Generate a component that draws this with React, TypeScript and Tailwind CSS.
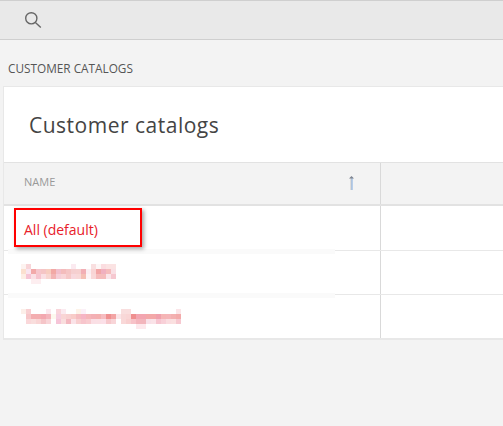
import React from 'react';

const blurRow1: string[][] = [
  ['#fdf3f0', '#f8d5d8', '', '', '', '', '', '', '', '', '#fbeaf0', '', '', '', '#f9dfe0', '#fdf6f6', '#fbdde0', '#fbe3e3', '#fbe3e3'],
  ['#fbe0cf', '#f9e5f0', '#f2a9a9', '#f6c6cc', '#f5c5c5', '#f7cdc0', '#f2a9a5', '#f2bfcc', '#f4bcbc', '#f5c5c5', '#f5cfd0', '#f6d0d0', '#f2afb5', '#fbeef2', '#f9d5d5', '#f2a5a5', '#f0b0c0', '#f5bcbc', '#f9e0e5'],
  ['#fdeee5', '#f6c5d5', '#fae0e5', '#f6c5cf', '#fadfe3', '#f8d5d0', '#f3b5b5', '#f6cfd8', '#f9d5d8', '#f6c8c8', '#f8d8dd', '#f8d8d8', '#f5c0b5', '#fdf4f6', '#f9d8d8', '#f5bcbc', '#f5bcbc', '#fae5ea', '#f6c8d0'],
  ['', '', '#fdeef0', '#fdeef0'],
];

const blurRow2: string[][] = [
  ['#fcefe9', '#f8d0d2', '', '', '', '#fbe8ee', '', '#f9d5da', '#fbeaf0', '', '', '#fdf3e8', '#fbf0f8', '', '', '', '', '', '', '', '#f9dede', '#f9dede', '', '', '', '', '', '', '', '', '', '#fbe5e8'],
  ['', '#f6c6c8', '#f3aeb0', '#f3aeb0', '#f3a8b0', '#f4b5bc', '#fdf8ee', '#f6cfe0', '#f9d5d5', '#f8d0d0', '#f8ccc8', '#f5bcc0', '#f6b5c5', '#f5b5b8', '#f3b0b5', '#f4b0b0', '#f6bcc0', '#ef9090', '#f3a5a5', '#fbe5e8', '#f8d8d8', '#f9d5d5', '#ef8f8f', '#f3a5b0', '#f3a5b0', '#f3a8a8', '#f3a8a8', '#f0a0ac', '#f5b5b5', '#f5b5b8', '#f3b0b0', '#f3aaaa'],
  ['', '#fad8da', '#f9dedd', '#f9d5d5', '#f5c5c8', '#f8d5d8', '', '#f6c5d8', '#f9dede', '#f3b8c0', '#fae3e8', '#f8cfd0', '#f7c5cc', '#f8ccd0', '#fadfe5', '#fae0e5', '#fbe0e8', '#f6c8cc', '#f8d5d8', '', '#f9d8d8', '#f8d0d0', '#f7c2c8', '#f3b5bc', '#f2b5bc', '#f8e0e8', '#fae3e8', '#f6c5d0', '#f8d0d8', '#fadde0', '#fae0e0', '#f6c8d0'],
  ['', '', '', '', '', '', '', '', '', '', '', '', '', '', '', '', '', '', '', '', '', '', '', '#fde8ec', '#fde8ec'],
];

// pixelated (redacted) row name
const BlurBlock: React.FC<{ rows: string[][] }> = ({ rows }) => (
  <svg width={rows[0].length * 5} height={20} viewBox={`0 0 ${rows[0].length * 5} 20`} shapeRendering="crispEdges" className="block">
    {rows.map((cells, y) =>
      cells.map((fill, x) => (fill ? <rect key={`${x}-${y}`} x={x * 5} y={y * 5} width={5} height={5} fill={fill} /> : null))
    )}
  </svg>
);

export default function App() {
  return (
    <div className="relative h-[426px] w-[503px] overflow-hidden bg-[#f3f3f3] font-['Open_Sans',sans-serif]">
      <div className="flex h-[40px] items-center border-y border-[#cfcfcf] bg-[#e9e9e9] pl-[24px]">
        <svg width="18" height="18" viewBox="0 0 18 18" fill="none" stroke="#666666" strokeWidth="1.4">
          <circle cx="7.3" cy="7.3" r="5.6" />
          <path d="M11.4 11.4l5.4 5.2" />
        </svg>
      </div>

      <div className="flex h-[46px] items-end pb-[11px] pl-[8px] text-[11.8px] leading-[14px] text-[#555555]">CUSTOMER CATALOGS</div>

      <div className="ml-[3px] w-[520px] border border-b-2 border-r-0 border-[#e8e8e8] bg-white">
        <div className="flex h-[75px] items-center pl-[25px] pt-[2px] text-[21px] tracking-[0.5px] text-[#444444]">Customer catalogs</div>

        <div className="flex h-[44px] border-y border-b-[2px] border-[#e2e2e2] bg-[#f3f3f3]">
          <div className="flex w-[377px] items-center justify-between border-r border-[#d9d9d9] pb-[2px] pl-[20px] pr-[25px] text-[11px] text-[#999999]">
            NAME
            <svg width="7" height="16" viewBox="0 0 7 16" fill="none">
              <path d="M3 2v13" stroke="#c9c4c0" strokeWidth="1" />
              <path d="M4 2v13" stroke="#7faae0" strokeWidth="1" />
              <path d="M1 3.5h5L3.5 1z" fill="#7f8590" />
            </svg>
          </div>
        </div>

        <div className="flex h-[45px] border-b border-[#e8e8e8]">
          <div className="flex w-[377px] items-center border-r border-[#d9d9d9] pl-[20px] pt-[2px] text-[14px] text-[#e8202a]">All (default)</div>
        </div>
        <div className="relative flex h-[44px] border-b border-[#e8e8e8]">
          <div className="flex w-[377px] items-center border-r border-[#d9d9d9] pl-[17px] pt-[3px]">
            <BlurBlock rows={blurRow1} />
          </div>
        </div>
        <div className="flex h-[43px]">
          <div className="flex w-[377px] items-center border-r border-[#d9d9d9] pl-[17px] pt-[5px]">
            <BlurBlock rows={blurRow2} />
          </div>
        </div>
      </div>

      {/* smudges left on the row lines by the redaction */}
      <div className="absolute left-[8px] top-[249px] h-[5px] w-[327px] bg-[#fafafa]" />
      <div className="absolute left-[8px] top-[293px] h-[5px] w-[327px] bg-[#fafafa]" />

      {/* red annotation box */}
      <div className="absolute left-[14px] top-[208px] h-[39px] w-[128px] border-[2px] border-[#ff0000] shadow-[2px_2px_4px_rgba(0,0,0,0.35)]" />
    </div>
  );
}
